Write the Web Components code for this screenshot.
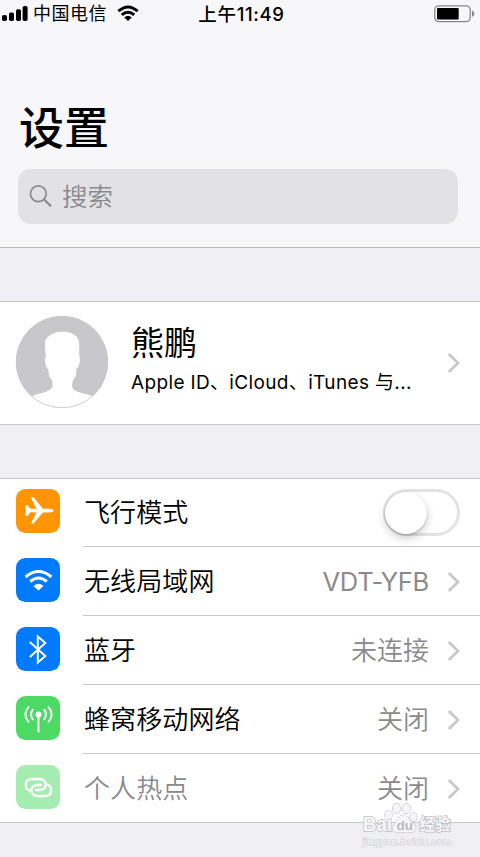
<!DOCTYPE html>
<html lang="zh-CN">
<head>
<meta charset="utf-8">
<title>设置</title>
<style>
html,body{margin:0;padding:0}
body{width:480px;height:857px;overflow:hidden;background:#efeff4;color:#000;font-family:Inter,"Noto Sans CJK SC",sans-serif}
</style>
</head>
<body>
<settings-screen></settings-screen>
<script>
const define = (name, html) => customElements.define(name, class extends HTMLElement {
  constructor() {
    super();
    const t = document.createElement('template');
    t.innerHTML = html;
    this.attachShadow({ mode: 'open' }).appendChild(t.content.cloneNode(true));
  }
});

define('status-bar', `
<style>
:host{display:grid;grid-template-columns:1fr auto 1fr;height:28px;box-sizing:border-box;padding:0 5px 0 2px;align-items:center}
.l{display:flex;align-items:center}
.carrier{font-size:18px;line-height:28px;margin:0 10px 0 5px;letter-spacing:.5px}
.time{font-size:18.5px;line-height:28px;font-weight:500;letter-spacing:.65px;padding-left:6px}
.bat{justify-self:end}
svg{display:block}
</style>
<div class="l">
<svg width="26" height="28" viewBox="0 0 26 28"><rect x="0" y="15" width="5" height="6" rx="1.8"/><rect x="7" y="12.500" width="5" height="8.5" rx="1.8"/><rect x="14" y="9.200" width="5" height="11.800" rx="1.8"/><rect x="20.600" y="6" width="5" height="15" rx="1.8"/></svg>
<span class="carrier">中国电信</span>
<svg width="22" height="28" viewBox="0 0 22 28"><g fill="none" stroke="#000" stroke-width="2.9"><path d="M1.300 11.200Q11 2.600 20.700 11.200"/><path d="M4.800 14.900Q11 9.400 17.200 14.900"/></g><path d="M7.300 17.500Q11 14.200 14.700 17.500L11 21Z"/></svg>
</div>
<span class="time">上午11:49</span>
<svg class="bat" width="41" height="28" viewBox="0 0 41 28"><rect x=".8" y="5.800" width="35.400" height="15.800" rx="4" fill="none" stroke="#88888b" stroke-width="1.300"/><rect x="3" y="8" width="21.700" height="11.500" rx="1"/><path d="M38 10.500q2.300 1 2.300 3.200t-2.300 3.200z" fill="#88888b"/></svg>
`);

define('search-field', `
<style>
:host{display:flex;align-items:center;height:55px;box-sizing:border-box;padding-left:11px;border-radius:13px;background:#e2e2e6;color:#8a8a8e;font-size:25.500px;line-height:55px;font-weight:350}
svg{margin-right:9px}
</style>
<svg width="24" height="24" viewBox="0 0 24 24" fill="none" stroke="#8a8a8e"><circle cx="9.300" cy="8.800" r="7.900" stroke-width="1.700"/><path d="M15 14.500L22 21.300" stroke-width="2.300"/></svg>
<span><slot></slot></span>
`);

define('chevron-icon', `
<style>:host{display:block;width:14px;height:22px}svg{display:block}</style>
<svg width="14" height="22" viewBox="0 0 14 22"><path d="M1.800 2L11 11L1.800 20" fill="none" stroke="#c7c7cc" stroke-width="2.700"/></svg>
`);

define('profile-card', `
<style>
:host{display:flex;align-items:center;height:124px;box-sizing:border-box;border-top:1px solid #c8c7cc;border-bottom:1px solid #c8c7cc;background:#fff;padding:0 19px 0 15px}
.t{flex:1;margin-left:22px;height:122px}
.n{font-size:33px;line-height:40px;margin-top:21px;height:40px;font-weight:400}
.d{font-size:19px;line-height:26px;margin-top:7px;letter-spacing:.35px;white-space:nowrap}
.a{margin-bottom:2px}
</style>
<svg class="a" width="94" height="94" viewBox="0 0 94 94"><defs><clipPath id="c"><circle cx="47" cy="47" r="46"/></clipPath></defs><circle cx="47" cy="47" r="46" fill="#c7c7cc"/><path clip-path="url(#c)" fill="#fff" d="M47 16.500C56 16.800 62 20 63.500 25C64.800 30 64 37 64.300 42C66 43 64.500 50 62.500 53C61.500 53 61.300 54 61.300 58C60.800 62 59.300 63.500 58 65C57 69 56.600 72 58 74C63 78.500 73 78.500 80 82.500V94H14V82.500C21 78.500 31 78 36 74C38 72 38 69 37 65C35 63 33.500 60 33.300 54C32 54 31 52 30.500 48C29.500 45 29.500 42.500 31 42C30.500 37 29 28 31 24C34 20 41 16.500 47 16.500Z"/><circle cx="47" cy="47" r="45.700" fill="none" stroke="#c7c7cc" stroke-width=".8"/></svg>
<div class="t"><div class="n"><slot name="name"></slot></div><div class="d"><slot></slot></div></div>
<chevron-icon></chevron-icon>
`);

define('toggle-switch', `
<style>
:host{display:block;width:77px;height:47px;box-sizing:border-box;border:3px solid #e3e3e5;border-radius:24px;background:#fff}
i{display:block;width:42px;height:42px;border-radius:50%;background:#fff;margin:-.500px 0 0 -1px;box-shadow:0 4px 8px rgba(0,0,0,.2),0 1px 2px rgba(0,0,0,.2)}
</style><i></i>
`);

define('settings-row', `
<style>
:host{display:flex;height:69px;box-sizing:border-box;padding-left:16px;background:#fff}
.i{width:44px;height:44px;margin-top:11px;border-radius:9.500px;background:var(--tint);overflow:hidden}
.b{flex:1;display:flex;align-items:center;margin-left:23px;padding:1px 19px 0 1px;border-bottom:1px solid #c8c7cc}
.l{flex:1;font-size:26px;line-height:40px;font-weight:350;letter-spacing:.1px}
.v{color:#8a8a8d;font-size:26px;line-height:40px;font-weight:350}
chevron-icon{margin-left:18px}
:host([first]){height:68px}
:host([first]) .i{margin-top:10px}
:host([last]){border-bottom:1px solid #c8c7cc}
:host([last]) .b{border-bottom:0}
:host([off]) .l{color:#8a8a8d}
:host([first]) chevron-icon{display:none}
:host([first]) .b{padding:0 20px 0 1px}
</style>
<div class="i"><slot name="icon"></slot></div>
<div class="b"><span class="l"><slot></slot></span><span class="v"><slot name="value"></slot></span><chevron-icon></chevron-icon></div>
`);

define('site-mark', `
<style>
:host{position:absolute;left:360px;top:800px;width:96px;height:48px}
svg{display:block}
text{font-family:"Liberation Sans","Noto Sans CJK SC",sans-serif}
</style>
<svg width="96" height="48" viewBox="0 0 96 48"><g fill="#f6f6f9" stroke="#c0c0c6" stroke-width="1.600" paint-order="stroke">
<text x="3" y="31" font-size="20" font-weight="700" textLength="29" lengthAdjust="spacingAndGlyphs">Bai</text>
<g stroke-width="1.200"><ellipse cx="28.500" cy="15" rx="3.600" ry="4.500"/><ellipse cx="36.500" cy="8.500" rx="3.800" ry="4.800"/><ellipse cx="46.500" cy="8.500" rx="3.800" ry="4.800"/><ellipse cx="53.500" cy="17" rx="3.300" ry="4.400"/>
<path d="M43 15C48 15 49 20 54 24C59 30 53 34 44 32C36 34 30 31 34 25C38 21 38 15 43 15Z"/></g>
<text x="59.500" y="30" font-size="15.500" font-weight="700">经验</text></g>
<text x="36.500" y="30" font-size="13.500" font-weight="700" fill="#b8b8be">du</text>
<text x="2.500" y="44.500" font-size="9.500" fill="#f8f8fa" stroke="#ceced4" stroke-width="1" paint-order="stroke" textLength="89" lengthAdjust="spacingAndGlyphs">jingyan.baidu.com</text>
</svg>
`);

define('settings-screen', `
<style>
:host{display:block;position:relative;width:480px;height:857px;overflow:hidden;background:#efeff4}
header{height:248px;box-sizing:border-box;border-bottom:1px solid #b9b9bc;background:#f7f7f9}
h1{margin:69px 0 0 19px;font-size:45px;line-height:64px;height:63px;font-weight:500}
search-field{margin:9px 22px 0 18px}
profile-card{margin-top:53px}
.g{margin-top:53px;border-top:1px solid #c8c7cc}
svg{display:block}
.n{font-size:25.500px;letter-spacing:-.3px;font-weight:400}
</style>
<header><status-bar></status-bar><h1>设置</h1><search-field>搜索</search-field></header>
<profile-card><span slot="name">熊鹏</span>Apple ID、iCloud、iTunes 与...</profile-card>
<div class="g">
<settings-row first style="--tint:#ff9500"><svg slot="icon" width="44" height="44" viewBox="0 0 44 44"><path fill="#fff" d="M9 16.200H11.500L14.500 19.800H20.500L15 8.800Q15.500 7.800 17.500 8.200L27 19.800H34Q37.500 20.300 37.500 21.700T34 23.600H27L17.500 34.600Q15.500 35 15 34.200L20.500 23.600L14.500 23.300L11.500 27H9L9.800 21.700Z"/></svg>飞行模式<toggle-switch slot="value"></toggle-switch></settings-row>
<settings-row style="--tint:#007aff"><svg slot="icon" width="44" height="44" viewBox="0 0 44 44"><g fill="none" stroke="#fff" stroke-width="3"><path d="M9.600 19Q22.500 8 35.400 19"/><path d="M14.200 23.500Q22.500 16.500 30.800 23.500"/></g><path fill="#fff" d="M17.500 28Q22.500 23.500 27.500 28L22.500 32.500Z"/></svg>无线局域网<span slot="value" class="n">VDT-YFB</span></settings-row>
<settings-row style="--tint:#007aff"><svg slot="icon" width="44" height="44" viewBox="0 0 44 44"><path fill="none" stroke="#fff" stroke-width="2" d="M13.800 15L29.300 29L21.800 35.500V9.500L29.300 16L13.800 30"/></svg>蓝牙<span slot="value">未连接</span></settings-row>
<settings-row style="--tint:#4cd964"><svg slot="icon" width="44" height="44" viewBox="0 0 44 44"><circle cx="22.500" cy="18.500" r="3" fill="#fff"/><g fill="none" stroke="#fff" stroke-width="2" stroke-linecap="round"><path d="M22.500 19V35.500M16.800 13.700Q13.200 18.500 16.800 23.300M28.200 13.700Q31.800 18.500 28.200 23.300M12.500 11.200Q6 18.500 12.500 25.800M32.500 11.200Q39 18.500 32.500 25.800"/></g></svg>蜂窝移动网络<span slot="value">关闭</span></settings-row>
<settings-row last off style="--tint:#a5ecb1"><svg slot="icon" width="44" height="44" viewBox="0 0 44 44"><g fill="none" stroke="#fff" stroke-width="2.300" stroke-linecap="round"><path d="M14 25.500C8 24 8.500 14 15.500 14H23C29 14 31.500 19 28.500 23C27.500 24.800 25 25 22 25H20"/><path d="M31 19.500C37 21 36.500 31 29.500 31H22C16 31 13.500 26 16.500 22C17.500 20.200 20 20 23 20H25"/></g></svg>个人热点<span slot="value">关闭</span></settings-row>
</div>
<site-mark></site-mark>
`);
</script>
</body>
</html>
